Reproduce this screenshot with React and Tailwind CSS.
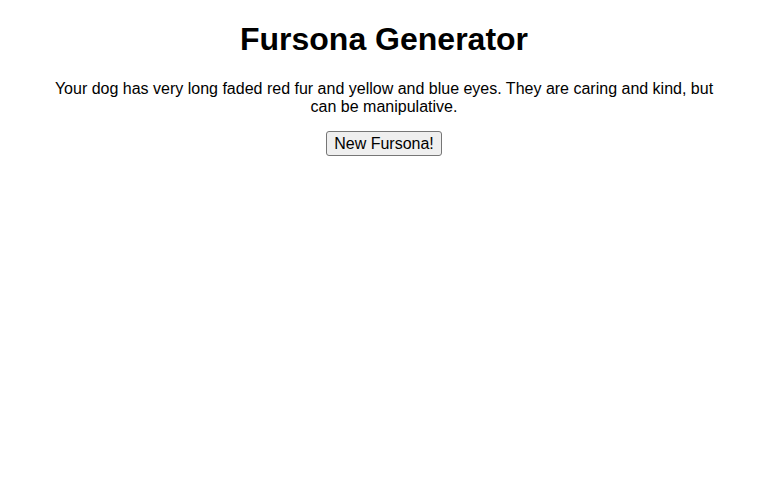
import { useState } from 'react';

export default function App() {
  const [text] = useState(
    'Your dog has very long faded red fur and yellow and blue eyes. They are caring and kind, but can be manipulative.'
  );

  return (
    <div className="min-h-screen bg-white text-center text-black font-['Liberation_Sans',Arial,sans-serif] px-2 pt-[21px]">
      <h1 className="text-[32px] leading-[37px] font-bold">Fursona Generator</h1>
      <p className="mt-[22px] mx-auto max-w-[672px] text-[16px] leading-[18px]">{text}</p>
      <button className="mt-[15px] px-[7px] py-[2px] text-[16px] leading-[19px] bg-[#efefef] border border-[#767676] rounded-[3px] text-black">
        New Fursona!
      </button>
    </div>
  );
}
